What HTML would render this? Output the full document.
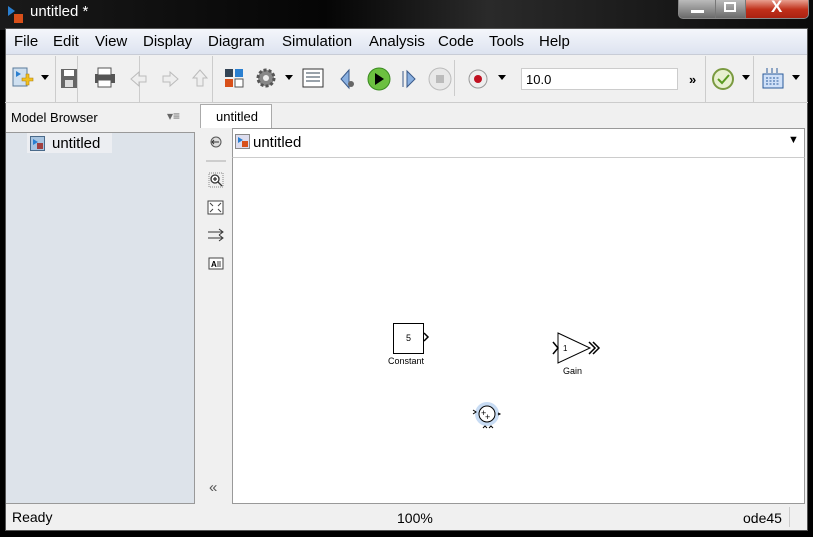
<!DOCTYPE html>
<html><head><style>
*{margin:0;padding:0;box-sizing:border-box}
body{width:813px;height:537px;background:#000;font-family:"Liberation Sans",sans-serif;position:relative;overflow:hidden}
.a{position:absolute}
.menu span{position:absolute;top:4px;font-size:15px;color:#000}
.tb{font-size:13px}
</style></head><body>
<div class="a" style="left:0;top:0;width:813px;height:30px;background:linear-gradient(90deg,#1a1a1a,#050505 40%,#2a2a2a 60%,#0a0a0a)"></div>
<svg class="a" style="left:6px;top:4px" width="20" height="20"><path d="M2 2 L9 7 L2 12Z" fill="#2a7fd0"/><rect x="8" y="10" width="9" height="9" fill="#d8501a"/></svg>
<div class="a" style="left:30px;top:3px;color:#fff;font-size:15px">untitled *</div>
<div class="a" style="left:678px;top:0;width:131px;height:19px;border:1px solid #888;border-top:none;border-radius:0 0 5px 5px;background:#777;overflow:hidden">
<div class="a" style="left:0;top:0;width:36px;height:19px;background:linear-gradient(#bbb,#666)"></div>
<div class="a" style="left:12px;top:10px;width:13px;height:3px;background:#fff"></div>
<div class="a" style="left:37px;top:0;width:29px;height:19px;background:linear-gradient(#bbb,#666)"></div>
<div class="a" style="left:45px;top:2px;width:12px;height:10px;border:2px solid #fff"></div>
<div class="a" style="left:67px;top:0;width:64px;height:19px;background:linear-gradient(#e8a090,#c0301a 50%,#a82010)"></div>
<div class="a" style="left:92px;top:-3px;color:#fff;font-size:17px;font-weight:bold">X</div>
</div>
<div class="a" style="left:5px;top:28px;width:803px;height:503px;background:#f0f0f0;border:1px solid #555"></div>
<div class="a menu" style="left:6px;top:29px;width:801px;height:26px;background:linear-gradient(#f4f6fb,#dde3f0);border-bottom:1px solid #c8ccd6">
<span style="left:8px">File</span><span style="left:47px">Edit</span><span style="left:89px">View</span><span style="left:137px">Display</span><span style="left:202px">Diagram</span><span style="left:276px">Simulation</span><span style="left:363px">Analysis</span><span style="left:432px">Code</span><span style="left:483px">Tools</span><span style="left:533px">Help</span>
</div>
<!-- toolbar separators -->
<div class="a" style="left:55px;top:56px;width:1px;height:46px;background:#ccc"></div>
<div class="a" style="left:77px;top:56px;width:1px;height:46px;background:#ccc"></div>
<div class="a" style="left:139px;top:56px;width:1px;height:46px;background:#ccc"></div>
<div class="a" style="left:212px;top:56px;width:1px;height:46px;background:#ccc"></div>
<div class="a" style="left:454px;top:60px;width:1px;height:36px;background:#ccc"></div>
<div class="a" style="left:705px;top:56px;width:1px;height:46px;background:#ccc"></div>
<div class="a" style="left:753px;top:56px;width:1px;height:46px;background:#ccc"></div>
<div class="a" style="left:5px;top:102px;width:803px;height:1px;background:#ccc"></div>
<svg class="a" style="left:0;top:60px" width="813" height="40">
<rect x="13" y="8" width="14" height="18" fill="#cfe0f0" stroke="#5a7a9a"/><path d="M16 11l5 3-5 3z" fill="#2a7fd0"/><path d="M22 18h4v-4h3v4h4v3h-4v4h-3v-4h-4z" fill="#f0c020" stroke="#b08010" stroke-width=".6"/>
<path d="M41 15h8l-4 5z" fill="#000"/>
<rect x="61" y="9" width="16" height="19" fill="#666"/><rect x="64" y="10" width="10" height="6" fill="#fff"/><rect x="65" y="20" width="8" height="7" fill="#ddd"/>
<rect x="95" y="14" width="20" height="9" fill="#555"/><rect x="98" y="8" width="13" height="7" fill="#fff" stroke="#555"/><rect x="98" y="20" width="13" height="7" fill="#fff" stroke="#555"/>
<path d="M131 19l8-7v4h7v6h-7v4z" fill="#eee" stroke="#bbb"/><path d="M178 19l-8-7v4h-7v6h7v4z" fill="#eee" stroke="#bbb"/><path d="M200 10l-7 8h4v8h6v-8h4z" fill="#eee" stroke="#bbb"/>
<rect x="225" y="9" width="8" height="8" fill="#345"/><rect x="235" y="9" width="8" height="8" fill="#2a7fd0"/><rect x="225" y="19" width="8" height="8" fill="#d8501a"/><rect x="235" y="19" width="8" height="8" fill="#fff" stroke="#555"/>
<circle cx="266" cy="18" r="8" fill="#888" stroke="#555" stroke-width="3" stroke-dasharray="3 2"/><circle cx="266" cy="18" r="3" fill="#eee"/>
<path d="M285 15h8l-4 5z" fill="#000"/>
<rect x="303" y="9" width="20" height="18" fill="#fff" stroke="#333"/><path d="M306 13h14M306 17h14M306 21h14" stroke="#345"/>
<path d="M349 10l-8 9 8 9z" fill="#8ab0e0" stroke="#3a5a8a"/><circle cx="351" cy="24" r="3" fill="#666"/>
<circle cx="379" cy="19" r="11" fill="#6cc040" stroke="#3a8a20"/><path d="M375 13l9 6-9 6z" fill="#000"/>
<path d="M403 11v16M407 11l8 8-8 8z" fill="#8ab0e0" stroke="#3a5a8a"/>
<circle cx="440" cy="19" r="11" fill="#e8e8e8" stroke="#bbb"/><rect x="436" y="15" width="8" height="8" fill="#bbb"/>
<circle cx="478" cy="19" r="9" fill="#eee" stroke="#999"/><circle cx="478" cy="19" r="4" fill="#c01020"/>
<path d="M498 15h8l-4 5z" fill="#000"/>
<text x="689" y="24" font-size="13" font-family="Liberation Sans" font-weight="bold">»</text>
<circle cx="723" cy="19" r="10" fill="#e8f0d0" stroke="#7a9a40" stroke-width="2"/><path d="M718 19l4 4 7-8" stroke="#5a9a20" stroke-width="2" fill="none"/>
<path d="M742 15h8l-4 5z" fill="#000"/>
<rect x="763" y="14" width="20" height="14" fill="#cfe0f8" stroke="#2a5a9a"/><path d="M766 18h14M766 21h14M766 24h14" stroke="#2a5a9a" stroke-dasharray="2 1.5"/><path d="M767 8v5M772 8v5M777 8v5" stroke="#2a5a9a"/>
<path d="M792 15h8l-4 5z" fill="#000"/>
</svg>
<div class="a" style="left:521px;top:68px;width:157px;height:22px;background:#fff;border:1px solid #ccc;font-size:13px;padding:3px 0 0 4px">10.0</div>
<!-- panel header -->
<div class="a" style="left:11px;top:110px;font-size:13px">Model Browser</div>
<div class="a" style="left:167px;top:109px;font-size:12px;color:#666">▾≡</div>
<div class="a" style="left:200px;top:104px;width:72px;height:24px;background:#fff;border:1px solid #aaa;border-bottom:none;font-size:13px;padding:4px 0 0 15px">untitled</div>
<div class="a" style="left:6px;top:132px;width:189px;height:372px;background:#dde3ea;border:1px solid #999;border-left:none"></div>
<div class="a" style="left:27px;top:133px;width:85px;height:20px;background:#eceef2"></div>
<svg class="a" style="left:30px;top:136px" width="16" height="16"><rect x=".5" y=".5" width="14" height="14" fill="#a8c4e0" stroke="#4a6a8a"/><path d="M3 3l5 3-5 3z" fill="#2a7fd0"/><rect x="7" y="7" width="6" height="6" fill="#a04040"/></svg>
<div class="a" style="left:52px;top:135px;font-size:15px">untitled</div>
<!-- left toolstrip -->
<svg class="a" style="left:200px;top:130px" width="32" height="370">
<circle cx="16" cy="12" r="5" fill="#ddd" stroke="#555"/><path d="M12 12h7M14 10l-2 2 2 2" stroke="#333" fill="none"/>
<path d="M6 31h20" stroke="#aaa"/>
<rect x="9" y="43" width="14" height="14" fill="none" stroke="#888" stroke-dasharray="1 1"/><circle cx="15" cy="49" r="4" fill="#fff" stroke="#333" stroke-width="1.3"/><path d="M13 49h4M15 47v4M18 52l4 4" stroke="#333" stroke-width="1.3"/>
<rect x="8" y="71" width="15" height="13" fill="#fff" stroke="#444"/><path d="M10 73l3 3M21 73l-3 3M10 82l3-3M21 82l-3-3" stroke="#444"/>
<path d="M8 102h14M8 108h14M19 99l4 3-4 3M19 105l4 3-4 3" stroke="#333" fill="none"/>
<rect x="9" y="128" width="14" height="11" fill="#fff" stroke="#444"/><text x="11" y="137" font-size="8" font-family="Liberation Sans" font-weight="bold">A</text><path d="M17 132h4M17 134h4M17 136h4" stroke="#444"/>
</svg>
<div class="a" style="left:209px;top:479px;font-size:15px;color:#555">«</div>
<!-- combo -->
<div class="a" style="left:232px;top:128px;width:573px;height:30px;background:#fff;border:1px solid #999"></div>
<svg class="a" style="left:235px;top:134px" width="16" height="16"><rect x=".5" y=".5" width="14" height="14" fill="#dde" stroke="#888"/><path d="M3 3l5 3-5 3z" fill="#2a7fd0"/><rect x="7" y="7" width="6" height="6" fill="#d8501a"/></svg>
<div class="a" style="left:253px;top:134px;font-size:15px">untitled</div>
<div class="a" style="left:788px;top:134px;font-size:11px">▼</div>
<div class="a" style="left:232px;top:157px;width:573px;height:347px;background:#fff;border:1px solid #999;border-top:1px solid #ccc"></div>
<!-- blocks -->
<div class="a" style="left:393px;top:323px;width:31px;height:31px;border:1px solid #000;background:#fff;font-size:9px;text-align:center;line-height:28px">5</div>
<svg class="a" style="left:380px;top:320px" width="240" height="115">
<path d="M44 13l4 4-4 4" stroke="#000" stroke-width="1.5" fill="none"/>
<path d="M178 13l32 15-32 15z" fill="#fff" stroke="#000"/>
<text x="183" y="31" font-size="8" font-family="Liberation Sans">1</text>
<path d="M173 22l5 6-5 6M209 22l6 6-6 6M213 22l6 6-6 6" stroke="#000" stroke-width="1.5" fill="none"/>
<circle cx="107" cy="94" r="12" fill="#c8dcf4"/><circle cx="107" cy="94" r="8" fill="#fff" stroke="#000"/>
<text x="101" y="96" font-size="9" font-family="Liberation Sans">+</text><text x="105" y="100" font-size="9" font-family="Liberation Sans">+</text>
<path d="M93 90l3 2-3 2M118 93l2 1-2 1M103 108l2-2 2 2M109 108l2-2 2 2" stroke="#000" fill="none"/>
</svg>
<div class="a" style="left:388px;top:356px;font-size:9px">Constant</div>
<div class="a" style="left:563px;top:366px;font-size:9px">Gain</div>
<!-- status -->
<div class="a" style="left:12px;top:509px;font-size:14px">Ready</div>
<div class="a" style="left:397px;top:510px;font-size:14px">100%</div>
<div class="a" style="left:743px;top:510px;font-size:14px">ode45</div>
<div class="a" style="left:789px;top:507px;width:1px;height:20px;background:#ccc"></div>
</body></html>
